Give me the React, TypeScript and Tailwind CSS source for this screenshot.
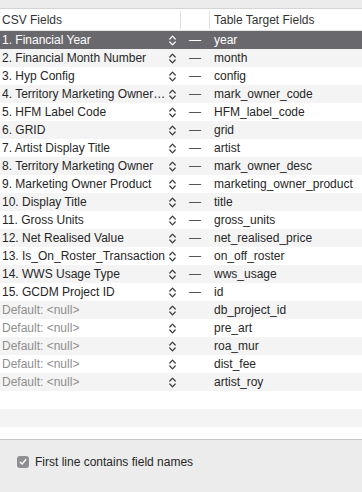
const mappings = [
  { csv: '1. Financial Year', target: 'year' },
  { csv: '2. Financial Month Number', target: 'month' },
  { csv: '3. Hyp Config', target: 'config' },
  { csv: '4. Territory Marketing Owner Code', target: 'mark_owner_code' },
  { csv: '5. HFM Label Code', target: 'HFM_label_code' },
  { csv: '6. GRID', target: 'grid' },
  { csv: '7. Artist Display Title', target: 'artist' },
  { csv: '8. Territory Marketing Owner', target: 'mark_owner_desc' },
  { csv: '9. Marketing Owner Product', target: 'marketing_owner_product' },
  { csv: '10. Display Title', target: 'title' },
  { csv: '11. Gross Units', target: 'gross_units' },
  { csv: '12. Net Realised Value', target: 'net_realised_price' },
  { csv: '13. Is_On_Roster_Transaction', target: 'on_off_roster' },
  { csv: '14. WWS Usage Type', target: 'wws_usage' },
  { csv: '15. GCDM Project ID', target: 'id' },
  { csv: null, target: 'db_project_id' },
  { csv: null, target: 'pre_art' },
  { csv: null, target: 'roa_mur' },
  { csv: null, target: 'dist_fee' },
  { csv: null, target: 'artist_roy' },
]

function Stepper({ light }: { light?: boolean }) {
  return (
    <svg width="7" height="11" viewBox="0 0 7 11" fill="none" className="shrink-0">
      <path
        d="M0.8 4 L3.5 1.2 L6.2 4 M0.8 7 L3.5 9.8 L6.2 7"
        stroke={light ? '#ffffff' : '#3a3a3a'}
        strokeWidth="1.2"
        strokeLinecap="round"
        strokeLinejoin="round"
      />
    </svg>
  )
}

export default function App() {
  return (
    <div
      className="w-[362px] h-[492px] flex flex-col bg-[#ececec] text-[12px] text-[#262626] overflow-hidden"
      style={{ fontFamily: '"Liberation Sans", Arial, sans-serif' }}
    >
      <div className="h-[9px] bg-[#ececec] border-b border-[#d4d4d4]"></div>

      {/* table */}
      <div className="h-[431px] bg-white border-b border-[#c8c8c8] flex flex-col">
        <div className="h-[22px] flex items-center border-b border-[#e2e2e2] text-[#333]">
          <div className="w-[180px] pl-[2px]">CSV Fields</div>
          <div className="w-[30px] h-[18px] border-l border-r border-[#e0e0e0]"></div>
          <div className="flex-1 pl-[4px]">Table Target Fields</div>
        </div>

        {mappings.map((m, i) => {
          const selected = i === 0
          const bg = selected ? 'bg-[#69686d] text-white' : i % 2 === 1 ? 'bg-[#f4f4f4]' : 'bg-white'
          return (
            <div key={i} className={`h-[18px] flex items-center ${bg}`}>
              <div className="w-[180px] flex items-center pl-[2px] pr-[4px]">
                <span className={`flex-1 min-w-0 truncate ${m.csv ? '' : 'text-[#8e8e8e]'}`}>
                  {m.csv ?? 'Default: <null>'}
                </span>
                <span className="ml-[2px] flex">
                  <Stepper light={selected} />
                </span>
              </div>
              <div className={`w-[30px] text-center ${selected ? 'text-white' : 'text-[#555]'}`}>
                {m.csv ? '—' : ''}
              </div>
              <div className="flex-1 pl-[4px] truncate">{m.target}</div>
            </div>
          )
        })}

        <div className="h-[18px] bg-white"></div>
        <div className="h-[18px] bg-[#f4f4f4]"></div>
        <div className="flex-1 bg-white"></div>
      </div>

      {/* footer */}
      <div className="flex items-center pl-[17px] pt-[13px]">
        <div className="w-[12px] h-[12px] rounded-[3px] bg-[#8e8e93] flex items-center justify-center">
          <svg width="8" height="8" viewBox="0 0 8 8" fill="none">
            <path d="M1.3 4.2 L3.2 6 L6.7 1.6" stroke="#fff" strokeWidth="1.4" strokeLinecap="round" strokeLinejoin="round" />
          </svg>
        </div>
        <span className="ml-[6px] text-[#262626]">First line contains field names</span>
      </div>
    </div>
  )
}
